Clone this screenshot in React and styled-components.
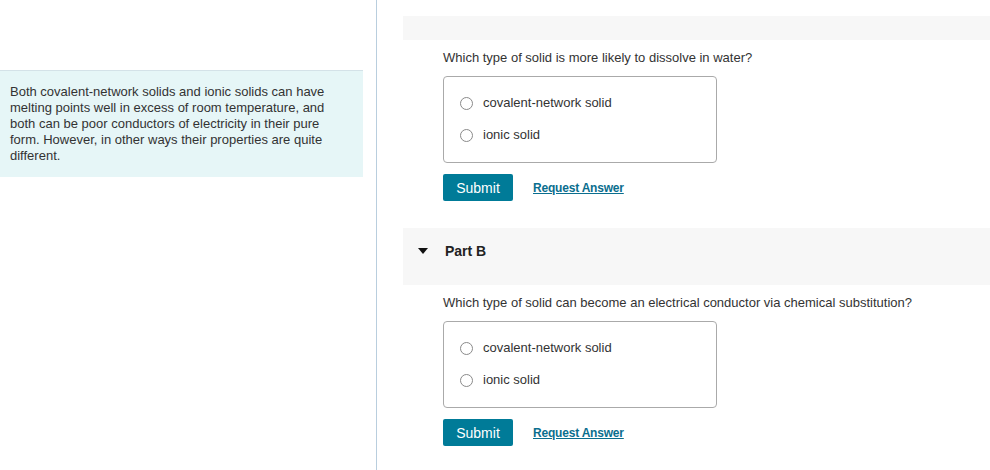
import React from 'react';
import styled, { createGlobalStyle } from 'styled-components';

const GlobalStyle = createGlobalStyle`
  html, body {
    margin: 0;
    padding: 0;
    background: #fff;
    font-family: "Liberation Sans", Arial, sans-serif;
    color: #333;
  }
  * {
    box-sizing: border-box;
  }
`;

const parts = [
  {
    id: 'a',
    header: null,
    question: 'Which type of solid is more likely to dissolve in water?',
    options: ['covalent-network solid', 'ionic solid'],
  },
  {
    id: 'b',
    header: 'Part B',
    question: 'Which type of solid can become an electrical conductor via chemical substitution?',
    options: ['covalent-network solid', 'ionic solid'],
  },
];

const App = () => {
  return (
    <Page>
      <GlobalStyle />
      <LeftPane>
        <Intro>
          Both covalent-network solids and ionic solids can have melting points well in
          excess of room temperature, and both can be poor conductors of electricity in
          their pure form. However, in other ways their properties are quite different.
        </Intro>
      </LeftPane>
      <Divider />
      <RightPane>
        {parts.map((part) => (
          <Part key={part.id}>
            <PartHeader $tall={!!part.header}>
              {part.header && (
                <>
                  <Caret viewBox="0 0 10 6">
                    <path d="M0 0 L10 0 L5 6 Z" fill="#111" />
                  </Caret>
                  <PartTitle>{part.header}</PartTitle>
                </>
              )}
            </PartHeader>
            <PartBody>
              <Question>{part.question}</Question>
              <Options>
                {part.options.map((opt) => (
                  <Option key={opt}>
                    <Radio type="radio" name={`q-${part.id}`} />
                    {opt}
                  </Option>
                ))}
              </Options>
              <Actions>
                <SubmitBtn>Submit</SubmitBtn>
                <RequestLink href="#">Request Answer</RequestLink>
              </Actions>
            </PartBody>
          </Part>
        ))}
      </RightPane>
    </Page>
  );
};

const Page = styled.div`
  display: flex;
  width: 990px;
  height: 470px;
  overflow: hidden;
`;

const LeftPane = styled.div`
  width: 363px;
  flex-shrink: 0;
  padding-top: 70px;
`;

const Intro = styled.div`
  background: #e6f6f7;
  border-top: 1px solid #d4e2e8;
  padding: 13px 30px 13px 10px;
  font-size: 13px;
  line-height: 16px;
  color: #333;
`;

const Divider = styled.div`
  width: 1px;
  margin-left: 13px;
  background: #b9cede;
  flex-shrink: 0;
`;

const RightPane = styled.div`
  flex: 1;
  padding: 16px 0 0 26px;
`;

const Part = styled.div`
  margin-bottom: 27px;
`;

const PartHeader = styled.div`
  display: flex;
  align-items: center;
  height: ${(p) => (p.$tall ? '57px' : '24px')};
  background: #f7f7f7;
  padding: ${(p) => (p.$tall ? '0 0 11px 15px' : '0 0 0 15px')};
`;

const Caret = styled.svg`
  width: 10px;
  height: 6px;
  margin-right: 17px;
`;

const PartTitle = styled.span`
  font-size: 14px;
  line-height: 16px;
  font-weight: bold;
  color: #222;
`;

const PartBody = styled.div`
  padding-left: 40px;
`;

const Question = styled.div`
  font-size: 13px;
  line-height: 16px;
  padding-top: 10px;
  margin-bottom: 10px;
`;

const Options = styled.div`
  width: 274px;
  border: 1px solid #aaa;
  border-radius: 4px;
  padding: 18px 0 19px 16px;
  display: flex;
  flex-direction: column;
  gap: 16px;
`;

const Option = styled.label`
  display: flex;
  align-items: center;
  height: 16px;
  font-size: 13px;
  line-height: 16px;
  color: #333;
`;

const Radio = styled.input`
  appearance: none;
  width: 13px;
  height: 13px;
  margin: 0 10px 0 0;
  border: 1px solid #8a8a8a;
  border-radius: 50%;
  background: #fff;
`;

const Actions = styled.div`
  display: flex;
  align-items: center;
  margin-top: 11px;
  gap: 20px;
`;

const SubmitBtn = styled.button`
  width: 70px;
  height: 27px;
  border: none;
  border-radius: 2px;
  background: #007b98;
  color: #fff;
  font-family: "Liberation Sans", Arial, sans-serif;
  font-size: 14px;
  cursor: pointer;
`;

const RequestLink = styled.a`
  font-size: 12px;
  font-weight: bold;
  letter-spacing: -0.2px;
  color: #0a6e8e;
  text-decoration: underline;
`;

export default App;
